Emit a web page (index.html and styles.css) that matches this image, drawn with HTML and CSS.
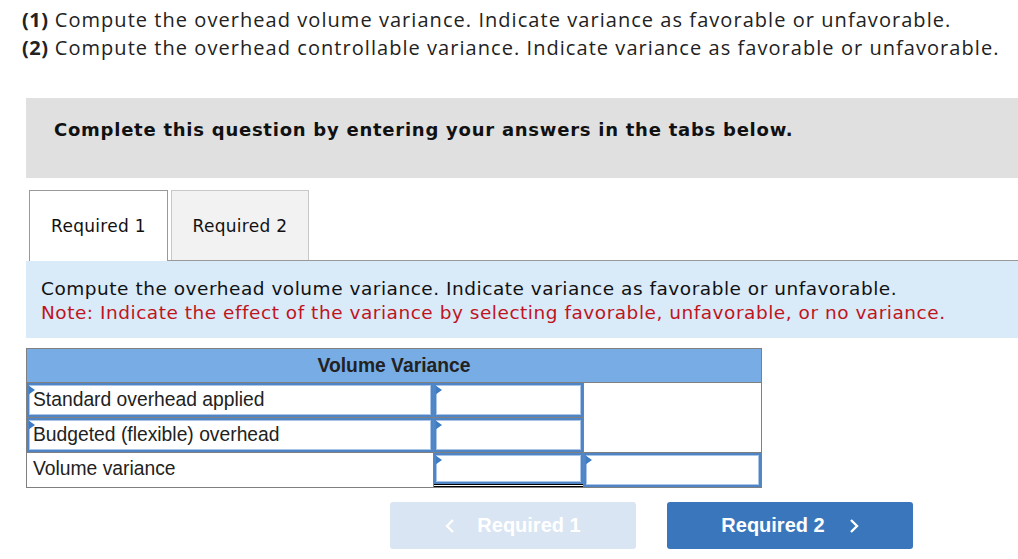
FILE: index.html
```html
<!DOCTYPE html>
<html>
<head>
<meta charset="utf-8">
<link rel="stylesheet" href="styles.css">
</head>
<body>
<div class="prompt">
  <p><b>(1)</b> Compute the overhead volume variance. Indicate variance as favorable or unfavorable.</p>
  <p><b>(2)</b> Compute the overhead controllable variance. Indicate variance as favorable or unfavorable.</p>
</div>
<div class="instructions">Complete this question by entering your answers in the tabs below.</div>
<div class="tabs">
  <div class="tab active">Required 1</div>
  <div class="tab-rest"><div class="tab">Required 2</div></div>
</div>
<div class="panel">
  <p>Compute the overhead volume variance. Indicate variance as favorable or unfavorable.</p>
  <p class="note">Note: Indicate the effect of the variance by selecting favorable, unfavorable, or no variance.</p>
</div>
<table class="grid">
  <colgroup><col class="c1"><col class="c2"><col class="c3"></colgroup>
  <tr><th colspan="3">Volume Variance</th></tr>
  <tr>
    <td><div class="field sel">Standard overhead applied</div></td>
    <td><div class="field"></div></td>
    <td class="empty" rowspan="2"></td>
  </tr>
  <tr>
    <td><div class="field sel">Budgeted (flexible) overhead</div></td>
    <td><div class="field"></div></td>
  </tr>
  <tr>
    <td><div class="label">Volume variance</div></td>
    <td class="total"><div class="field"></div></td>
    <td><div class="field"></div></td>
  </tr>
</table>
<div class="nav">
  <div class="btn prev"><svg width="10" height="16" viewBox="0 0 10 16"><polyline points="8,2 2,8 8,14" fill="none" stroke="#fff" stroke-width="2.4"/></svg><span>Required 1</span></div>
  <div class="btn next"><span>Required 2</span><svg width="10" height="16" viewBox="0 0 10 16"><polyline points="2,2 8,8 2,14" fill="none" stroke="#fff" stroke-width="2.4"/></svg></div>
</div>
</body>
</html>
```
FILE: styles.css
```css
html, body { margin: 0; padding: 0; background: #fff; }
body { width: 1018px; overflow: hidden; }
p { margin: 0; white-space: nowrap; }
.prompt {
  padding: 6px 0 0 22px;
  font-family: "Open Sans", "Liberation Sans", sans-serif;
  font-size: 20px;
  letter-spacing: 1.05px;
  line-height: 28px;
  color: #222;
}
.prompt b { font-weight: 700; letter-spacing: 0.5px; }
.instructions {
  margin: 36px 0 0 26px;
  height: 80px;
  box-sizing: border-box;
  padding: 22px 0 0 28px;
  background: #e0e0e0;
  font-family: "DejaVu Sans", Verdana, sans-serif;
  font-weight: bold;
  font-size: 18px;
  letter-spacing: 0.75px;
  line-height: 20px;
  color: #111;
  white-space: nowrap;
}
.tabs {
  display: flex;
  margin: 12px 0 0 29px;
  height: 71px;
}
.tab {
  width: 139px;
  height: 70px;
  box-sizing: border-box;
  display: flex;
  align-items: center;
  justify-content: center;
  font-family: "DejaVu Sans", Verdana, sans-serif;
  font-size: 17px;
  letter-spacing: 0.3px;
  color: #111;
}
.tab.active {
  height: 71px;
  border: 1px solid #999;
  border-bottom: none;
  background: #fff;
}
.tab-rest {
  flex: 1;
  display: flex;
  align-items: flex-end;
  padding-left: 3px;
  border-bottom: 1px solid #999;
}
.tab-rest .tab {
  width: 138px;
  border: 1px solid #c8c8c8;
  border-bottom: none;
  background: #f2f2f2;
}
.panel {
  margin-left: 26px;
  height: 77px;
  box-sizing: border-box;
  padding: 16px 0 0 15px;
  background: #d9eaf9;
  font-family: "DejaVu Sans", Verdana, sans-serif;
  font-size: 18.5px;
  letter-spacing: 0.52px;
  line-height: 24px;
  color: #111;
}
.panel .note { color: #c0141c; }
.grid {
  margin: 10px 0 0 26px;
  width: 735px;
  border-collapse: collapse;
  table-layout: fixed;
  font-family: "Liberation Sans", Arial, sans-serif;
  font-size: 19.3px;
  color: #222;
}
.grid col.c1 { width: 407px; }
.grid col.c2 { width: 150px; }
.grid col.c3 { width: 178px; }
.grid th {
  height: 33px;
  padding: 0;
  background: #77ade4;
  border: 1px solid #808080;
  font-weight: bold;
  text-align: center;
  color: #222;
}
.grid td {
  height: 34px;
  padding: 0;
  border: 1px solid #808080;
  vertical-align: top;
}
.field {
  position: relative;
  height: 34px;
  box-sizing: border-box;
  border: 2px solid #4f85c5;
  box-shadow: inset 0 0 0 1px #a9c6e8;
  background: #fff;
  padding: 2px 0 0 4px;
  line-height: 26px;
  white-space: nowrap;
  overflow: hidden;
}
.field::before {
  content: "";
  position: absolute;
  left: -1px;
  top: 0;
  border-left: 7px solid #3d7bc4;
  border-top: 5px solid transparent;
  border-bottom: 5px solid transparent;
}
.label {
  height: 34px;
  padding: 3px 0 0 6px;
  box-sizing: border-box;
  line-height: 26px;
}
.total { position: relative; }
.total .field { height: 31px; }
.total::after {
  content: "";
  position: absolute;
  left: 0;
  right: 0;
  bottom: 0;
  height: 3px;
  border-top: 1px solid #000;
  border-bottom: 1px solid #000;
  box-sizing: border-box;
}
.nav {
  display: flex;
  gap: 31px;
  margin: 14px 0 0 390px;
}
.btn {
  width: 246px;
  height: 47px;
  border-radius: 3px;
  display: flex;
  align-items: center;
  justify-content: center;
  font-family: "Liberation Sans", Arial, sans-serif;
  font-weight: bold;
  font-size: 20px;
  color: #fff;
}
.btn.prev { background: #d9e5f2; gap: 22px; }
.btn.next { background: #3a76bb; gap: 24px; }
```
